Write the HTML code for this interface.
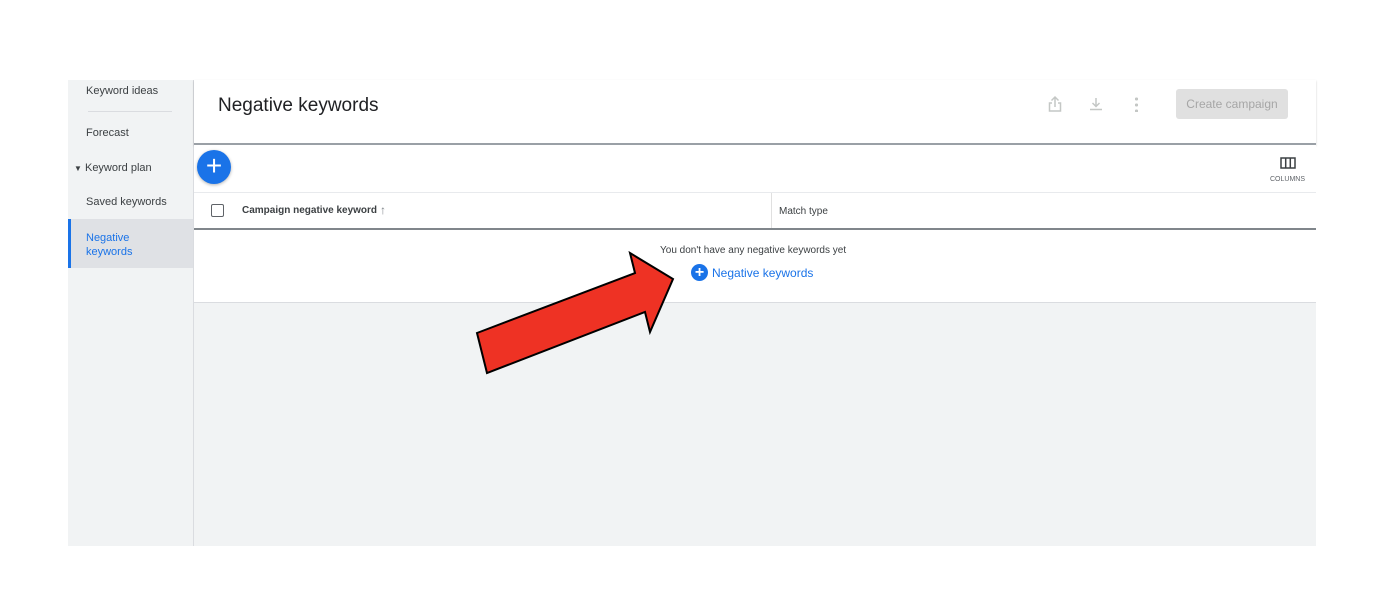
<!DOCTYPE html>
<html><head><style>
body{margin:0;width:1376px;height:614px;background:#fff;font-family:"Liberation Sans",Arial,sans-serif;position:relative;overflow:hidden}
.a{position:absolute}
.side{left:68px;top:80px;width:125px;height:466px;background:#f1f3f4;border-right:1px solid #dadce0}
.si{position:absolute;left:18px;font-size:11px;color:#3c4043}
</style></head><body>
<div class="a side">
<div class="si" style="top:5px">Keyword ideas</div>
<div class="a" style="left:20px;top:31px;width:84px;height:1px;background:#dadce0"></div>
<div class="si" style="top:47px">Forecast</div>
<div class="si" style="top:82px;left:6px"><span style="font-size:8px">▼</span> Keyword plan</div>
<div class="si" style="top:116px">Saved keywords</div>
<div class="a" style="left:0;top:139px;width:125px;height:49px;background:#dfe1e5;border-left:3px solid #1a73e8;box-sizing:border-box"></div>
<div class="si" style="top:151px;color:#1a73e8;line-height:14px">Negative<br>keywords</div>
</div>
<div class="a" style="left:194px;top:80px;width:1122px;height:466px;background:#f1f3f4"></div>
<div class="a" style="left:194px;top:80px;width:1122px;height:63px;background:#fff;border-bottom:2px solid #9aa0a6;box-shadow:0 1px 2px rgba(0,0,0,.2)"></div>
<div class="a" style="left:218px;top:95px;font-size:19px;color:#202124">Negative keywords</div>
<svg class="a" style="left:1045px;top:94px" width="20" height="20" viewBox="0 0 20 20" fill="none" stroke="#c4c7c5" stroke-width="1.5"><path d="M10 3v10M6.5 6.5L10 3l3.5 3.5M7 9H4.5v8h11V9H13"/></svg>
<svg class="a" style="left:1087px;top:95px" width="18" height="18" viewBox="0 0 18 18" fill="none" stroke="#c4c7c5" stroke-width="1.5"><path d="M9 3v8M5.5 8L9 11.5 12.5 8M3 14.5h12"/></svg>
<div class="a" style="left:1135px;top:96px;width:3px;height:16px;background:radial-gradient(circle,#c4c7c5 1.5px,transparent 1.6px) 0 0/3px 6px"></div>
<div class="a" style="left:1176px;top:89px;width:112px;height:30px;background:#e0e0e0;border-radius:3px;color:#a6a6a6;font-size:12px;line-height:30px;text-align:center">Create campaign</div>
<div class="a" style="left:194px;top:145px;width:1122px;height:158px;background:#fff"></div>
<div class="a" style="left:197px;top:150px;width:34px;height:34px;border-radius:50%;background:#1a73e8;box-shadow:0 1px 3px rgba(0,0,0,.3);color:#fff;font-size:28px;line-height:32px;text-align:center">+</div>
<svg class="a" style="left:1280px;top:157px" width="16" height="12" viewBox="0 0 16 12" fill="none" stroke="#3c4043" stroke-width="1.5"><rect x="1" y="1" width="14" height="10"/><path d="M5.7 1v10M10.3 1v10"/></svg>
<div class="a" style="left:1270px;top:176px;font-size:7px;color:#5f6368">COLUMNS</div>
<div class="a" style="left:194px;top:192px;width:1122px;height:1px;background:#e8eaed"></div>
<div class="a" style="left:771px;top:193px;width:1px;height:35px;background:#e0e0e0"></div>
<div class="a" style="left:194px;top:228px;width:1122px;height:2px;background:#80868b"></div>
<div class="a" style="left:211px;top:204px;width:11px;height:11px;border:1.5px solid #5f6368;border-radius:2px"></div>
<div class="a" style="left:242px;top:205px;font-size:10px;line-height:12px;font-weight:bold;color:#3c4043">Campaign negative keyword</div>
<div class="a" style="left:380px;top:203px;font-size:12px;line-height:14px;color:#80868b">↑</div>
<div class="a" style="left:779px;top:206px;font-size:10px;color:#3c4043">Match type</div>
<div class="a" style="left:660px;top:245px;font-size:10px;color:#3c4043">You don't have any negative keywords yet</div>
<div class="a" style="left:691px;top:264px;width:17px;height:17px;border-radius:50%;background:#1a73e8;color:#fff;font-size:16px;line-height:17px;text-align:center;font-weight:bold">+</div>
<div class="a" style="left:712px;top:266px;font-size:12px;color:#1a73e8">Negative keywords</div>
<div class="a" style="left:194px;top:302px;width:1122px;height:1px;background:#dadce0"></div>
<svg class="a" style="left:0;top:0" width="1376" height="614"><polygon points="477,333 635,273 630,253 673,279 650,332 645,312 487,373" fill="#ee3224" stroke="#000" stroke-width="2" stroke-linejoin="miter"/></svg>
</body></html>
